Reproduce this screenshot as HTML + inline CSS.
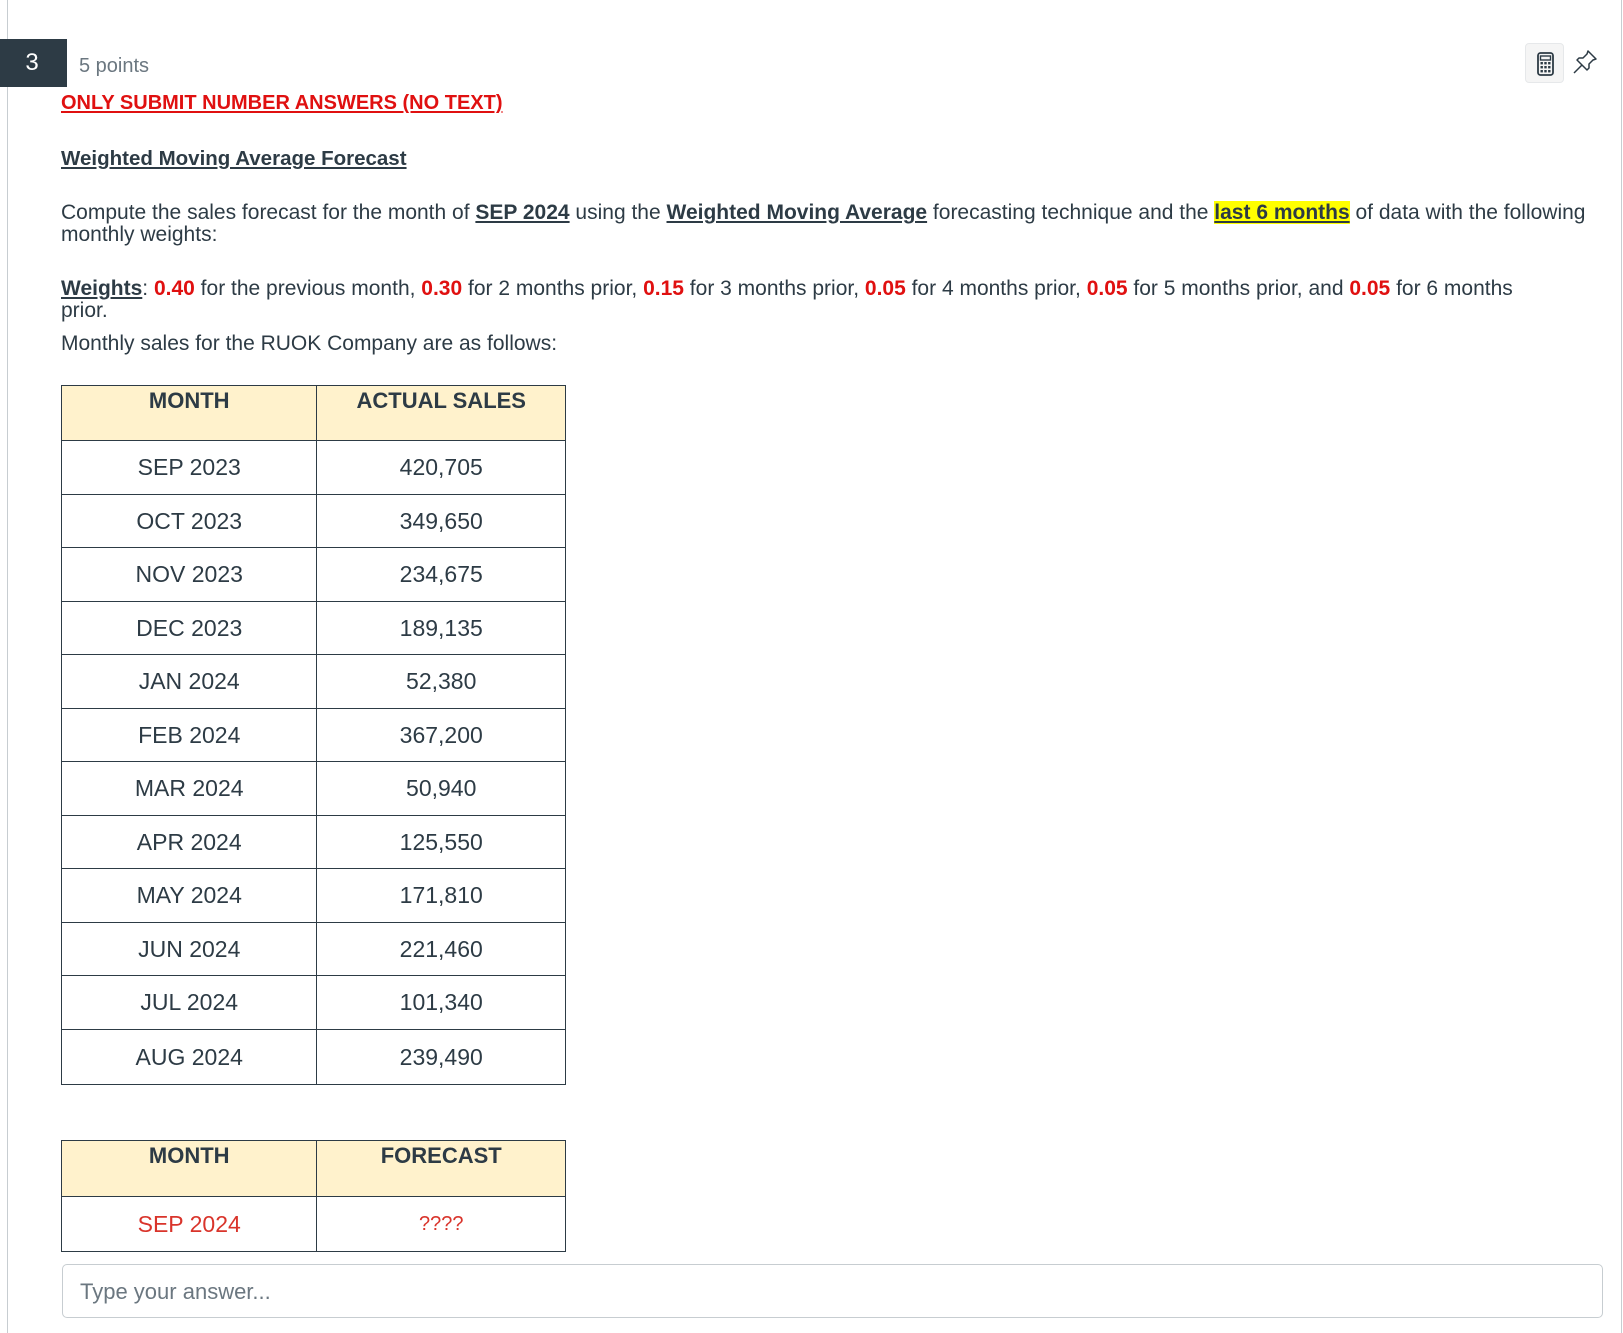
<!DOCTYPE html>
<html><head><meta charset="utf-8"><style>
*{margin:0;padding:0;box-sizing:border-box}
body{width:1623px;height:1333px;background:#fff;position:relative;overflow:hidden;font-family:"Liberation Sans",sans-serif;color:#2d3b45}
.vl{position:absolute;left:7px;top:0;width:1px;height:1333px;background:#c7cdd1}
.vr{position:absolute;left:1621px;top:0;width:1px;height:1333px;background:#c7cdd1}
.badge{position:absolute;left:0;top:39px;width:67px;height:48px;background:#2d3b45;color:#fff;font-size:24px;line-height:48px;text-align:center;padding-right:3px}
.pts{position:absolute;left:79px;top:55px;font-size:20px;color:#6b7780}
.t{position:absolute;left:61px;font-size:21px;line-height:22px;white-space:nowrap}
.red{color:#e01010;font-weight:bold}
u{text-decoration-thickness:2px;text-underline-offset:2px}
b{font-weight:bold}
.hl{background:#ffff00}
table{position:absolute;left:61px;border-collapse:collapse;font-size:23px}
td{border:1.5px solid #2d3b45;text-align:center;padding:0}
.h td{background:#fff2cc;vertical-align:top;padding-top:2px;font-weight:bold;font-size:22px}
.calc{position:absolute;left:1525px;top:43px;width:39px;height:40px;border:1px solid #e6e8ea;background:#f5f5f5;border-radius:4px}
.inp{position:absolute;left:62px;top:1264px;width:1541px;height:54px;border:1px solid #c7cdd1;border-radius:5px;font-size:22px;color:#6b7780;padding:14px 17px}
</style></head><body>
<div class="vl"></div><div class="vr"></div>
<div class="badge">3</div>
<div class="pts">5 points</div>
<div class="calc"><svg width="39" height="40" viewBox="0 0 39 40"><rect x="12" y="9" width="15" height="22" rx="2.5" fill="none" stroke="#2d3b45" stroke-width="1.8"/><rect x="14.5" y="12" width="10" height="4" fill="none" stroke="#2d3b45" stroke-width="1.4"/><g fill="#2d3b45"><rect x="14.5" y="18" width="2.4" height="2.4"/><rect x="18.3" y="18" width="2.4" height="2.4"/><rect x="22.1" y="18" width="2.4" height="2.4"/><rect x="14.5" y="22" width="2.4" height="2.4"/><rect x="18.3" y="22" width="2.4" height="2.4"/><rect x="22.1" y="22" width="2.4" height="2.4"/><rect x="14.5" y="26" width="2.4" height="2.4"/><rect x="18.3" y="26" width="2.4" height="2.4"/><rect x="22.1" y="26" width="2.4" height="2.4"/></g></svg></div>
<svg style="position:absolute;left:1571px;top:48px" width="28" height="28" viewBox="0 0 28 28"><g fill="none" stroke="#2d3b45" stroke-width="1.5" stroke-linejoin="round"><path d="M17 3 L25 11 L22 12 L18 16 L18 20 L16 22 L6 12 L8 10 L12 10 L16 6 Z"/><path d="M11 17 L3 25"/></g></svg>
<div class="t" style="top:92px;color:#e01010;font-weight:bold;font-size:20px"><u>ONLY SUBMIT NUMBER ANSWERS (NO TEXT)</u></div>
<div class="t" style="top:148px;font-weight:bold;font-size:20.5px"><u>Weighted Moving Average Forecast</u></div>
<div class="t" style="top:202px">Compute the sales forecast for the month of <b><u>SEP 2024</u></b> using the <b><u>Weighted Moving Average</u></b> forecasting technique and the <b class="hl"><u>last 6 months</u></b> of data with the following<br>monthly weights:</div>
<div class="t" style="top:278px"><b><u>Weights</u></b>: <span class="red">0.40</span> for the previous month, <span class="red">0.30</span> for 2 months prior, <span class="red">0.15</span> for 3 months prior, <span class="red">0.05</span> for 4 months prior, <span class="red">0.05</span> for 5 months prior, and <span class="red">0.05</span> for 6 months<br>prior.</div>
<div class="t" style="top:333px">Monthly sales for the RUOK Company are as follows:</div>
<table style="top:385px;width:505px">
<colgroup><col style="width:256px"><col style="width:249px"></colgroup>
<tr class="h" style="height:55px"><td>MONTH</td><td>ACTUAL SALES</td></tr>
<tr style="height:54px"><td>SEP 2023</td><td>420,705</td></tr>
<tr style="height:53px"><td>OCT 2023</td><td>349,650</td></tr>
<tr style="height:54px"><td>NOV 2023</td><td>234,675</td></tr>
<tr style="height:53px"><td>DEC 2023</td><td>189,135</td></tr>
<tr style="height:54px"><td>JAN 2024</td><td>52,380</td></tr>
<tr style="height:53px"><td>FEB 2024</td><td>367,200</td></tr>
<tr style="height:54px"><td>MAR 2024</td><td>50,940</td></tr>
<tr style="height:53px"><td>APR 2024</td><td>125,550</td></tr>
<tr style="height:54px"><td>MAY 2024</td><td>171,810</td></tr>
<tr style="height:53px"><td>JUN 2024</td><td>221,460</td></tr>
<tr style="height:54px"><td>JUL 2024</td><td>101,340</td></tr>
<tr style="height:55px"><td>AUG 2024</td><td>239,490</td></tr>
</table>
<table style="top:1140px;width:505px">
<colgroup><col style="width:256px"><col style="width:249px"></colgroup>
<tr class="h" style="height:56px"><td>MONTH</td><td>FORECAST</td></tr>
<tr style="height:55px"><td style="color:#d9342b">SEP 2024</td><td style="color:#d9342b;font-size:20px">????</td></tr>
</table>
<div class="inp">Type your answer...</div>
</body></html>
